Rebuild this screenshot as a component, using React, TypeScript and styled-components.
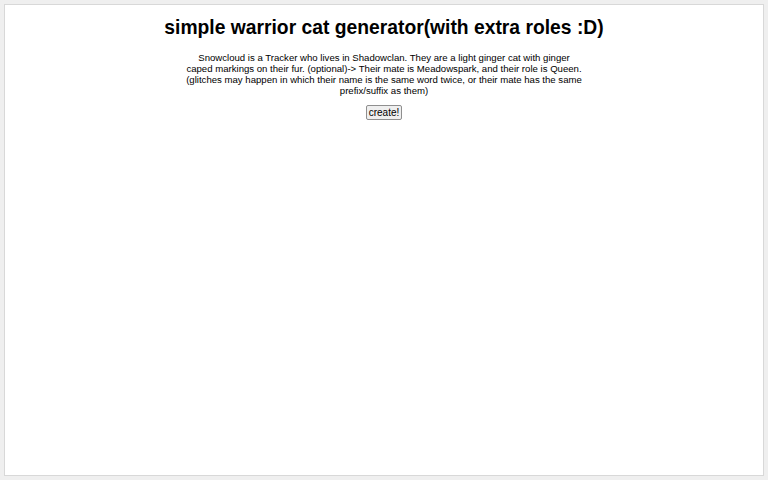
import * as React from 'react'
import styled, { createGlobalStyle } from 'styled-components'

const GlobalStyle = createGlobalStyle`
  html, body {
    margin: 0;
    padding: 0;
    background: #efefef;
  }
  body {
    padding: 4px;
    font-family: "Liberation Sans", Arial, sans-serif;
  }
`

const Page = styled.div`
  box-sizing: border-box;
  height: 472px;
  background: #ffffff;
  border: 1px solid #d8d8d8;
  display: flex;
  flex-direction: column;
  align-items: center;
  padding-top: 12px;
`

const Title = styled.h1`
  margin: 0;
  font-size: 19.3px;
  line-height: 22px;
  font-weight: bold;
  color: #000;
`

const Result = styled.p`
  margin: 13px 0 0;
  width: 396px;
  font-size: 9.6px;
  line-height: 11px;
  text-align: center;
  color: #000;
`

const CreateButton = styled.button`
  margin-top: 9px;
  font-family: "Liberation Sans", Arial, sans-serif;
  font-size: 10px;
  line-height: 11px;
  padding: 1px 2px;
  color: #000;
  background: #efefef;
  border: 1px solid #8f8f8f;
  border-radius: 2px;
`

const text =
  'Snowcloud is a Tracker who lives in Shadowclan. They are a light ginger cat with ginger caped markings on their fur. (optional)-> Their mate is Meadowspark, and their role is Queen. (glitches may happen in which their name is the same word twice, or their mate has the same prefix/suffix as them)'

export default function App() {
  const [result] = React.useState(text)
  return (
    <>
      <GlobalStyle />
      <Page>
        <Title>simple warrior cat generator(with extra roles :D)</Title>
        <Result>{result}</Result>
        <CreateButton>create!</CreateButton>
      </Page>
    </>
  )
}
